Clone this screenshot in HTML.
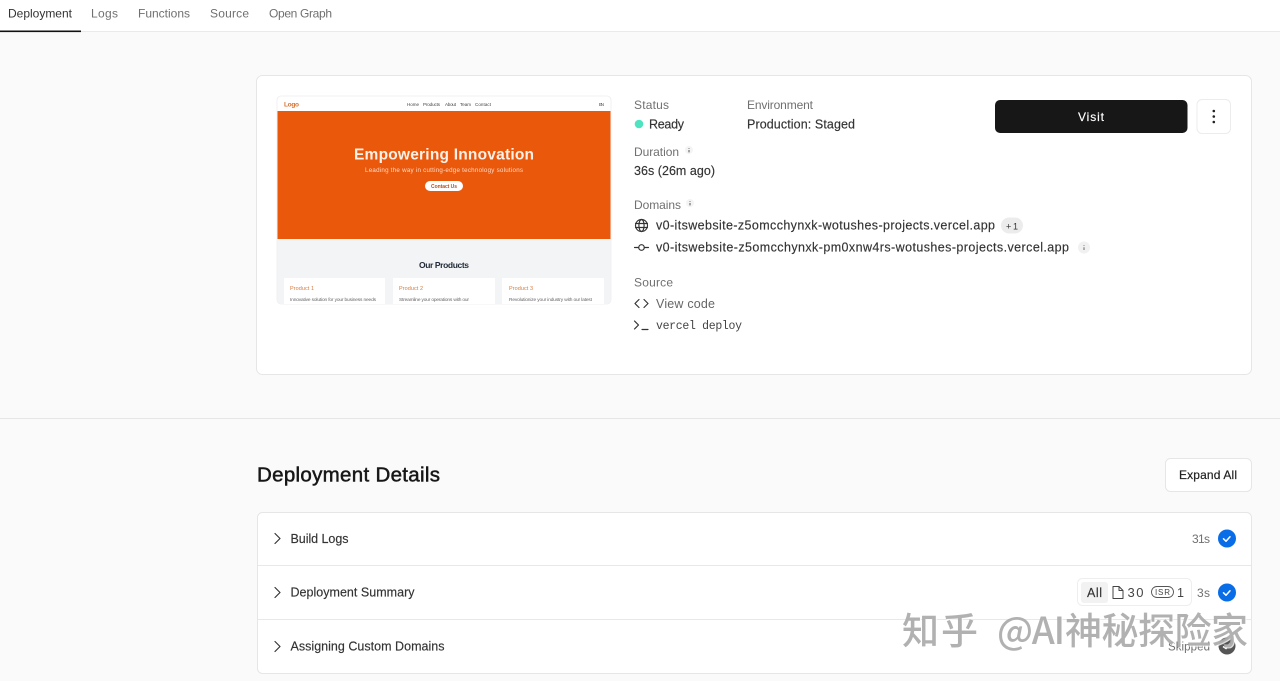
<!DOCTYPE html>
<html lang="en"><head><meta charset="utf-8"><title>Deployment</title>
<style>
html,body{margin:0;padding:0;background:#fafafa;width:1280px;height:681px;overflow:hidden}
svg{display:block;position:absolute;left:0;top:0}
text{font-family:"Liberation Sans","Noto Sans CJK SC",sans-serif;font-size:12.500px;fill:#1a1a1a}
.t{font-size:12px;fill:#707070}
.g{font-size:12px;fill:#707070}
.d{fill:#333;stroke:#333;stroke-width:.15}
.m{font-family:"Liberation Mono",monospace;font-size:11.500px;fill:#444}
.n{font-size:4.500px;fill:#444}
.ic{fill:none;stroke:#333;stroke-width:1.150;stroke-linecap:round;stroke-linejoin:round}
.wm{font-family:"Noto Sans CJK SC","Liberation Sans",sans-serif;font-size:37px;font-weight:500}
.wa{fill:#fff;fill-opacity:.8}
.wb{fill:#a6a6a6;fill-opacity:.88}
.pv text{filter:blur(.25px)}
</style></head><body>
<svg width="1280" height="681" viewBox="0 0 1280 681" xmlns="http://www.w3.org/2000/svg">
<rect width="1280" height="681" fill="#fafafa"/>
<!-- tabs -->
<rect width="1280" height="31.500" fill="#fff"/>
<rect y="31" width="1280" height="1" fill="#eaeaea"/>
<rect y="30.500" width="81" height="1.600" fill="#111"/>
<text x="8" y="17.500" textLength="64" class="t" style="fill:#333">Deployment</text>
<text x="91" y="17.500" textLength="27" class="t">Logs</text>
<text x="138" y="17.500" textLength="52" class="t">Functions</text>
<text x="210" y="17.500" textLength="39" class="t">Source</text>
<text x="269" y="17.500" textLength="63" class="t">Open Graph</text>
<!-- main card -->
<rect x="256.500" y="75.500" width="995" height="299" rx="6" fill="#fff" stroke="#e6e6e6"/>
<!-- preview -->
<g class="pv">
<rect x="277" y="96" width="334" height="208" rx="4" fill="#fff" stroke="#eee" stroke-width=".8"/>
<rect x="277.500" y="111" width="333" height="128" fill="#ea580c"/>
<path d="M277.500 239h333v61a4 4 0 0 1-4 4h-325a4 4 0 0 1-4-4z" fill="#f3f4f6"/>
<text x="284" y="106.500" textLength="15" style="font-size:6.500px;font-weight:bold;fill:#d9702f">Logo</text>
<text x="407" y="106" class="n" textLength="12">Home</text>
<text x="423" y="106" class="n" textLength="17">Products</text>
<text x="445" y="106" class="n" textLength="11">About</text>
<text x="460" y="106" class="n" textLength="11">Team</text>
<text x="475" y="106" class="n" textLength="16">Contact</text>
<text x="599" y="106" class="n" textLength="5">EN</text>
<text x="354" y="159.500" textLength="180" style="font-size:15.500px;font-weight:bold;fill:#fdf1e8">Empowering Innovation</text>
<text x="365" y="172" textLength="158" style="font-size:6.200px;fill:#ffd9c2">Leading the way in cutting-edge technology solutions</text>
<rect x="425" y="181" width="38" height="10" rx="5" fill="#fff"/>
<text x="431" y="188" textLength="26" style="font-size:5px;font-weight:bold;fill:#b9501a">Contact Us</text>
<text x="419" y="268" textLength="50" style="font-size:8.500px;font-weight:bold;fill:#1f2937">Our Products</text>
<rect x="284" y="278" width="101" height="26" fill="#fff"/>
<rect x="393" y="278" width="102" height="26" fill="#fff"/>
<rect x="502" y="278" width="102" height="26" fill="#fff"/>
<text x="290" y="290" textLength="24" style="font-size:5.500px;fill:#d9793f">Product 1</text>
<text x="399" y="290" textLength="24" style="font-size:5.500px;fill:#d9793f">Product 2</text>
<text x="509" y="290" textLength="24" style="font-size:5.500px;fill:#d9793f">Product 3</text>
<text x="290" y="301" textLength="86" style="font-size:4.800px;fill:#666">Innovative solution for your business needs</text>
<text x="399" y="301" textLength="70" style="font-size:4.800px;fill:#666">Streamline your operations with our</text>
<text x="509" y="301" textLength="83" style="font-size:4.800px;fill:#666">Revolutionize your industry with our latest</text>
</g>
<!-- info -->
<text x="634" y="109" textLength="35" class="g">Status</text>
<circle cx="639" cy="124" r="4.300" fill="#50e3c2"/>
<text x="649" y="128.500" textLength="35" class="d">Ready</text>
<text x="747" y="109" textLength="66" class="g">Environment</text>
<text x="747" y="128.500" textLength="108" class="d">Production: Staged</text>
<text x="634" y="156" textLength="45" class="g">Duration</text>
<circle cx="689" cy="150" r="4" fill="#f4f4f4"/><path d="M689 148.300v.7M689 150v2.400" stroke="#555" stroke-width="1"/>
<text x="634" y="175" textLength="81" class="d">36s (26m ago)</text>
<text x="634" y="209" textLength="47" class="g">Domains</text>
<circle cx="690" cy="203" r="4" fill="#f4f4f4"/><path d="M690 201.300v.7M690 203v2.400" stroke="#555" stroke-width="1"/>
<!-- globe -->
<g class="ic"><circle cx="641.500" cy="225.500" r="6"/><ellipse cx="641.500" cy="225.500" rx="2.600" ry="6"/><path d="M635.500 223.500h12M635.500 227.500h12"/></g>
<text x="656" y="229.500" textLength="339" class="d">v0-itswebsite-z5omcchynxk-wotushes-projects.vercel.app</text>
<rect x="1001" y="217.500" width="22" height="16" rx="8" fill="#ececec"/>
<text x="1006" y="229.500" textLength="12" style="font-size:9px;fill:#333">+1</text>
<!-- commit -->
<g class="ic"><circle cx="641.500" cy="247.500" r="2.800"/><path d="M634.500 247.500h4.200M644.300 247.500h4.200"/></g>
<text x="656" y="251.500" textLength="413" class="d">v0-itswebsite-z5omcchynxk-pm0xnw4rs-wotushes-projects.vercel.app</text>
<circle cx="1084" cy="247.500" r="6" fill="#f1f1f1"/><path d="M1084 245.300v.7M1084 247.200v2.800" stroke="#666" stroke-width="1"/>
<text x="634" y="286.500" textLength="39" class="g">Source</text>
<g class="ic"><path d="M639 299.500l-4 4 4 4M644 299.500l4 4-4 4"/></g>
<text x="656" y="308" textLength="59" style="fill:#666">View code</text>
<g class="ic"><path d="M634.500 321l4 4-4 4M642 329.500h6"/></g>
<text x="656" y="329" textLength="86" class="m">vercel deploy</text>
<!-- buttons -->
<rect x="995" y="100" width="192.500" height="33" rx="5" fill="#171717"/>
<text x="1078" y="121" textLength="26" style="font-size:12px;fill:#fff;stroke:#fff;stroke-width:.15">Visit</text>
<rect x="1197" y="99.500" width="33.500" height="34" rx="5" fill="#fff" stroke="#ececec"/>
<circle cx="1213.800" cy="111" r="1.300" fill="#222"/><circle cx="1213.800" cy="116.500" r="1.300" fill="#222"/><circle cx="1213.800" cy="122" r="1.300" fill="#222"/>
<!-- divider -->
<rect y="418" width="1280" height="1" fill="#e6e6e6"/>
<!-- details -->
<text x="257" y="481.500" textLength="183" style="font-size:20.500px;fill:#171717;stroke:#171717;stroke-width:.5">Deployment Details</text>
<rect x="1165.500" y="458.500" width="86" height="33" rx="5" fill="#fff" stroke="#e6e6e6"/>
<text x="1179" y="479" textLength="58" style="font-size:12px;fill:#222;stroke:#222;stroke-width:.2">Expand All</text>
<rect x="257.500" y="512.500" width="994" height="161" rx="5" fill="#fff" stroke="#e6e6e6"/>
<rect x="258" y="565" width="993" height="1" fill="#e8e8e8"/>
<rect x="258" y="619" width="993" height="1" fill="#e8e8e8"/>
<g class="ic"><path d="M275 533.500l5 5-5 5M275 587.500l5 5-5 5M275 641.500l5 5-5 5"/></g>
<text x="290.500" y="543" textLength="58" class="d">Build Logs</text>
<text x="290.500" y="596.500" textLength="124" class="d">Deployment Summary</text>
<text x="290.500" y="650.500" textLength="154" class="d">Assigning Custom Domains</text>
<text x="1192" y="543" textLength="18" class="g">31s</text>
<circle cx="1227" cy="538.500" r="9" fill="#0a6de8"/><path d="M1223.500 538.800l2.500 2.400 4-4.400" fill="none" stroke="#fff" stroke-width="1.500" stroke-linecap="round" stroke-linejoin="round"/>
<rect x="1077.500" y="578.500" width="114" height="27" rx="5" fill="#fff" stroke="#eee"/>
<rect x="1081" y="582" width="27" height="21" rx="3" fill="#f2f2f2"/>
<text x="1087" y="597" textLength="15" class="d">All</text>
<path d="M1113 586.500h6l4 4v8h-10zM1119 586.500v4h4" fill="none" stroke="#444" stroke-width="1" stroke-linejoin="round"/>
<text x="1127.500" y="597" textLength="16" style="font-size:13px;fill:#444">30</text>
<rect x="1151.500" y="586.500" width="22" height="11" rx="5.500" fill="none" stroke="#555" stroke-width=".9"/>
<text x="1155" y="595" textLength="15" style="font-size:8px;fill:#444">ISR</text>
<text x="1177" y="597" textLength="5.500" style="fill:#444">1</text>
<text x="1197" y="597" textLength="13" class="g">3s</text>
<circle cx="1227" cy="592.500" r="9" fill="#0a6de8"/><path d="M1223.500 592.800l2.500 2.400 4-4.400" fill="none" stroke="#fff" stroke-width="1.500" stroke-linecap="round" stroke-linejoin="round"/>
<text x="1168" y="650.500" textLength="42" class="g" style="font-size:11.500px">Skipped</text>
<circle cx="1227" cy="646" r="8.500" fill="#555"/><path d="M1223 646.500l3 2 4-5" fill="none" stroke="#fff" stroke-width="1.500"/>
<!-- watermark -->
<text x="903" y="645" textLength="76" class="wm wa">知乎</text>
<text x="998" y="645" textLength="68" class="wm wa">@AI</text>
<text x="1066" y="645" textLength="183" class="wm wa">神秘探险家</text>
<text x="902" y="644" textLength="76" class="wm wb">知乎</text>
<text x="997" y="644" textLength="68" class="wm wb">@AI</text>
<text x="1065" y="644" textLength="183" class="wm wb">神秘探险家</text>
</svg>
</body></html>
